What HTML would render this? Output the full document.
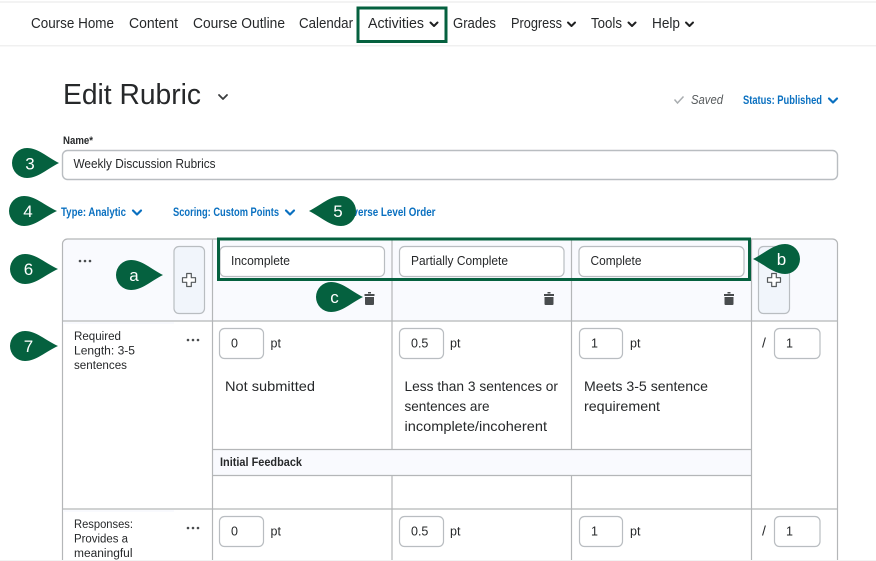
<!DOCTYPE html>
<html lang="en"><head><meta charset="utf-8"><title>Edit Rubric</title>
<style>
html,body{margin:0;padding:0;background:#fff;width:876px;height:561px;overflow:hidden}
svg{display:block;filter:blur(.3px)}
text{font-family:"Liberation Sans",sans-serif;fill:#26282a}
.nav{font-size:14.5px}
.b{fill:#0a70c0;font-size:11.5px;font-weight:bold}
.c{font-size:12.5px}
.t{font-size:11.5px}
.d{font-size:14px}
.bub{fill:#05613f}
.bt{fill:#fff;font-size:17px;text-anchor:middle}
.chev{fill:none;stroke:#202122;stroke-width:2;stroke-linecap:round;stroke-linejoin:round}
.chb{fill:none;stroke:#0a70c0;stroke-width:2.2;stroke-linecap:round;stroke-linejoin:round}
.in{fill:#fff;stroke:#b9bdc1;stroke-width:1.2}
.ln{stroke:#b4b6b8;stroke-width:1.2}
.pl{fill:#fff;stroke:#565a5c;stroke-width:1.2;stroke-linejoin:round}
.tr{fill:#494c4e}
.dot{fill:#494c4e}
</style></head><body>
<svg width="876" height="561" viewBox="0 0 876 561" xmlns="http://www.w3.org/2000/svg">
<rect width="876" height="561" fill="#fff"/>
<!-- nav -->
<rect x="0" y="1" width="876" height="2" fill="#f3f3f3"/>
<rect x="0" y="45" width="876" height="1" fill="#f0f0f0"/>
<rect x="0" y="46" width="876" height="1" fill="#f8f8f8"/>
<text class="nav" x="31" y="28" textLength="83" lengthAdjust="spacingAndGlyphs">Course Home</text>
<text class="nav" x="129" y="28" textLength="49" lengthAdjust="spacingAndGlyphs">Content</text>
<text class="nav" x="193" y="28" textLength="92" lengthAdjust="spacingAndGlyphs">Course Outline</text>
<text class="nav" x="299" y="28" textLength="54" lengthAdjust="spacingAndGlyphs">Calendar</text>
<text class="nav" x="368" y="28" textLength="56" lengthAdjust="spacingAndGlyphs">Activities</text>
<path class="chev" d="M430.5 22.5l3.500 3.500l3.500-3.500"/>
<rect x="358" y="8" width="88" height="33.500" fill="none" stroke="#05613f" stroke-width="3"/>
<text class="nav" x="453" y="28" textLength="43" lengthAdjust="spacingAndGlyphs">Grades</text>
<text class="nav" x="511" y="28" textLength="51" lengthAdjust="spacingAndGlyphs">Progress</text>
<path class="chev" d="M568 22.500l3.500 3.500l3.500-3.500"/>
<text class="nav" x="591" y="28" textLength="31" lengthAdjust="spacingAndGlyphs">Tools</text>
<path class="chev" d="M628.500 22.500l3.500 3.500l3.500-3.500"/>
<text class="nav" x="652" y="28" textLength="28" lengthAdjust="spacingAndGlyphs">Help</text>
<path class="chev" d="M686 22.500l3.500 3.500l3.500-3.500"/>
<!-- title -->
<text x="63" y="104" font-size="29" textLength="138" lengthAdjust="spacingAndGlyphs">Edit Rubric</text>
<path class="chev" style="stroke:#3a3c3e;stroke-width:1.800" d="M219 95l4 4l4-4"/>
<path d="M674.500 99.500l3 3.500l6-6.500" fill="none" stroke="#a9adb0" stroke-width="1.500"/>
<text x="691" y="104" font-size="12.500" font-style="italic" textLength="32" lengthAdjust="spacingAndGlyphs" style="fill:#565a5c">Saved</text>
<text class="b" x="743" y="104" textLength="79" lengthAdjust="spacingAndGlyphs">Status: Published</text>
<path class="chb" d="M829 98.500l4 4l4-4"/>
<!-- name -->
<text x="63" y="144" font-size="11" font-weight="bold" textLength="30" lengthAdjust="spacingAndGlyphs">Name*</text>
<rect class="in" x="62.500" y="150.500" width="775" height="29" rx="5" style="stroke-width:1.400"/>
<text class="c" x="73.500" y="168" textLength="142" lengthAdjust="spacingAndGlyphs">Weekly Discussion Rubrics</text>
<!-- options -->
<text class="b" x="61" y="216" textLength="65" lengthAdjust="spacingAndGlyphs">Type: Analytic</text>
<path class="chb" d="M133 210.500l4 4l4-4"/>
<text class="b" x="173" y="216" textLength="106" lengthAdjust="spacingAndGlyphs">Scoring: Custom Points</text>
<path class="chb" d="M286 210.500l4 4l4-4"/>
<text class="b" x="340" y="216" textLength="95.500" lengthAdjust="spacingAndGlyphs">Reverse Level Order</text>
<!-- table -->
<path d="M62.500 561V244a5 5 0 0 1 5-5H832.500a5 5 0 0 1 5 5V561" fill="#fff"/>
<path d="M62.500 321V244a5 5 0 0 1 5-5H832.500a5 5 0 0 1 5 5V321Z" fill="#f9fafe"/>
<rect x="212" y="449.500" width="539.500" height="26" fill="#f9fafe"/>
<path d="M62.500 561V244a5 5 0 0 1 5-5H832.500a5 5 0 0 1 5 5V561" fill="none" stroke="#b4b6b8" stroke-width="1.200"/>
<g class="ln">
<line x1="212.500" y1="239" x2="212.500" y2="561"/>
<line x1="392" y1="239" x2="392" y2="449"/>
<line x1="392" y1="476" x2="392" y2="561"/>
<line x1="571.500" y1="239" x2="571.500" y2="449"/>
<line x1="571.500" y1="476" x2="571.500" y2="561"/>
<line x1="751.500" y1="239" x2="751.500" y2="561"/>
<line x1="62" y1="321" x2="838" y2="321"/>
<line x1="212" y1="449.500" x2="751.500" y2="449.500"/>
<line x1="212" y1="475.500" x2="751.500" y2="475.500"/>
<line x1="62" y1="509" x2="838" y2="509"/>
</g>
<rect x="63" y="322" width="111" height="2" fill="#f9fafe"/>
<rect x="63" y="510" width="111" height="2" fill="#f9fafe"/>
<!-- header cells -->
<circle class="dot" cx="80" cy="261" r="1.300"/><circle class="dot" cx="85" cy="261" r="1.300"/><circle class="dot" cx="90" cy="261" r="1.300"/>
<rect x="174" y="246.500" width="30.500" height="67" rx="5" fill="#f1f5fb" stroke="#b9bdc1" stroke-width="1.200"/>
<path class="pl" transform="translate(189,280)" d="M-2.300 -6.500h4.600v4.200h4.200v4.600h-4.200v4.200h-4.600v-4.200h-4.200v-4.600h4.200z"/>
<rect x="758.500" y="246.500" width="31" height="67" rx="5" fill="#f1f5fb" stroke="#b9bdc1" stroke-width="1.200"/>
<path class="pl" transform="translate(774,280)" d="M-2.300 -6.500h4.600v4.200h4.200v4.600h-4.200v4.200h-4.600v-4.200h-4.200v-4.600h4.200z"/>
<rect class="in" x="220" y="246.500" width="164.500" height="30" rx="5"/>
<text class="c" x="231" y="265" textLength="59" lengthAdjust="spacingAndGlyphs">Incomplete</text>
<rect class="in" x="399.500" y="246.500" width="164.500" height="30" rx="5"/>
<text class="c" x="411" y="265" textLength="97" lengthAdjust="spacingAndGlyphs">Partially Complete</text>
<rect class="in" x="579" y="246.500" width="165" height="30" rx="5"/>
<text class="c" x="590.500" y="265" textLength="51" lengthAdjust="spacingAndGlyphs">Complete</text>
<rect x="218.500" y="239" width="531" height="40.500" fill="none" stroke="#05613f" stroke-width="3"/>
<g class="tr">
<path d="M368 292h3v1.500h-3zM364.500 294h10v2h-10zM365 297h9v7a1 1 0 0 1-1 1h-7a1 1 0 0 1-1-1z"/>
<path transform="translate(179.500,0)" d="M368 292h3v1.500h-3zM364.500 294h10v2h-10zM365 297h9v7a1 1 0 0 1-1 1h-7a1 1 0 0 1-1-1z"/>
<path transform="translate(359.500,0)" d="M368 292h3v1.500h-3zM364.500 294h10v2h-10zM365 297h9v7a1 1 0 0 1-1 1h-7a1 1 0 0 1-1-1z"/>
</g>
<!-- row 1 -->
<text class="t" x="74" y="340" textLength="47" lengthAdjust="spacingAndGlyphs">Required</text>
<text class="t" x="74" y="354.500" textLength="61" lengthAdjust="spacingAndGlyphs">Length: 3-5</text>
<text class="t" x="74" y="369" textLength="53" lengthAdjust="spacingAndGlyphs">sentences</text>
<circle class="dot" cx="188" cy="340" r="1.300"/><circle class="dot" cx="193" cy="340" r="1.300"/><circle class="dot" cx="198" cy="340" r="1.300"/>
<rect class="in" x="219.500" y="328.500" width="44" height="30" rx="5"/>
<text class="c" x="231" y="347.500">0</text><text class="c" x="270.500" y="347.500">pt</text>
<rect class="in" x="399.500" y="328.500" width="44" height="30" rx="5"/>
<text class="c" x="411" y="347.500">0.5</text><text class="c" x="450" y="347.500">pt</text>
<rect class="in" x="579.500" y="328.500" width="43" height="30" rx="5"/>
<text class="c" x="591" y="347.500">1</text><text class="c" x="630" y="347.500">pt</text>
<text class="c" x="762" y="347.500" style="font-size:14px">/</text>
<rect class="in" x="774.500" y="328.500" width="45.500" height="30" rx="5"/>
<text class="c" x="786" y="347.500">1</text>
<text class="d" x="225" y="391" textLength="90" lengthAdjust="spacingAndGlyphs">Not submitted</text>
<text class="d" x="404.500" y="391" textLength="153.500" lengthAdjust="spacingAndGlyphs">Less than 3 sentences or</text>
<text class="d" x="404.500" y="411" textLength="85" lengthAdjust="spacingAndGlyphs">sentences are</text>
<text class="d" x="404.500" y="431" textLength="142.500" lengthAdjust="spacingAndGlyphs">incomplete/incoherent</text>
<text class="d" x="584" y="391" textLength="124" lengthAdjust="spacingAndGlyphs">Meets 3-5 sentence</text>
<text class="d" x="584" y="411" textLength="76" lengthAdjust="spacingAndGlyphs">requirement</text>
<text class="t" x="220" y="466" font-weight="bold" font-size="12" style="font-size:12px" textLength="82" lengthAdjust="spacingAndGlyphs">Initial Feedback</text>
<!-- row 2 -->
<text class="t" x="74" y="528" textLength="59" lengthAdjust="spacingAndGlyphs">Responses:</text>
<text class="t" x="74" y="542.500" textLength="54" lengthAdjust="spacingAndGlyphs">Provides a</text>
<text class="t" x="74" y="557" textLength="58.500" lengthAdjust="spacingAndGlyphs">meaningful</text>
<circle class="dot" cx="188" cy="528" r="1.300"/><circle class="dot" cx="193" cy="528" r="1.300"/><circle class="dot" cx="198" cy="528" r="1.300"/>
<rect class="in" x="219.500" y="516.500" width="44" height="30" rx="5"/>
<text class="c" x="231" y="535.500">0</text><text class="c" x="270.500" y="535.500">pt</text>
<rect class="in" x="399.500" y="516.500" width="44" height="30" rx="5"/>
<text class="c" x="411" y="535.500">0.5</text><text class="c" x="450" y="535.500">pt</text>
<rect class="in" x="579.500" y="516.500" width="43" height="30" rx="5"/>
<text class="c" x="591" y="535.500">1</text><text class="c" x="630" y="535.500">pt</text>
<text class="c" x="762" y="535.500" style="font-size:14px">/</text>
<rect class="in" x="774.500" y="516.500" width="45.500" height="30" rx="5"/>
<text class="c" x="786" y="535.500">1</text>
<rect x="0" y="560" width="876" height="1" fill="#f2f2f2"/>
<!-- bubbles -->
<path class="bub" transform="translate(27,163)" d="M0 -15C11 -15 20 -6 32 0C20 6 11 15 0 15A15 15 0 0 1 0 -15Z"/>
<text class="bt" x="30" y="169.500">3</text>
<path class="bub" transform="translate(24,211)" d="M0 -15C11 -15 20 -6 33 0C20 6 11 15 0 15A15 15 0 0 1 0 -15Z"/>
<text class="bt" x="28" y="217">4</text>
<path class="bub" transform="translate(341,211) scale(-1,1)" d="M0 -15C11 -15 20 -6 32 0C20 6 11 15 0 15A15 15 0 0 1 0 -15Z"/>
<text class="bt" x="338" y="217">5</text>
<path class="bub" transform="translate(25,269)" d="M0 -15C11 -15 20 -6 33 0C20 6 11 15 0 15A15 15 0 0 1 0 -15Z"/>
<text class="bt" x="28.500" y="275">6</text>
<path class="bub" transform="translate(25,346)" d="M0 -15C11 -15 20 -6 33 0C20 6 11 15 0 15A15 15 0 0 1 0 -15Z"/>
<text class="bt" x="28.500" y="352">7</text>
<path class="bub" transform="translate(131,275)" d="M0 -15C11 -15 20 -6 32 0C20 6 11 15 0 15A15 15 0 0 1 0 -15Z"/>
<text class="bt" x="134" y="281">a</text>
<path class="bub" transform="translate(785,259) scale(-1,1)" d="M0 -15C11 -15 20 -6 32 0C20 6 11 15 0 15A15 15 0 0 1 0 -15Z"/>
<text class="bt" x="781.500" y="265">b</text>
<path class="bub" transform="translate(331,297)" d="M0 -15C11 -15 20 -6 32 0C20 6 11 15 0 15A15 15 0 0 1 0 -15Z"/>
<text class="bt" x="334.500" y="303">c</text>
</svg>
</body></html>
